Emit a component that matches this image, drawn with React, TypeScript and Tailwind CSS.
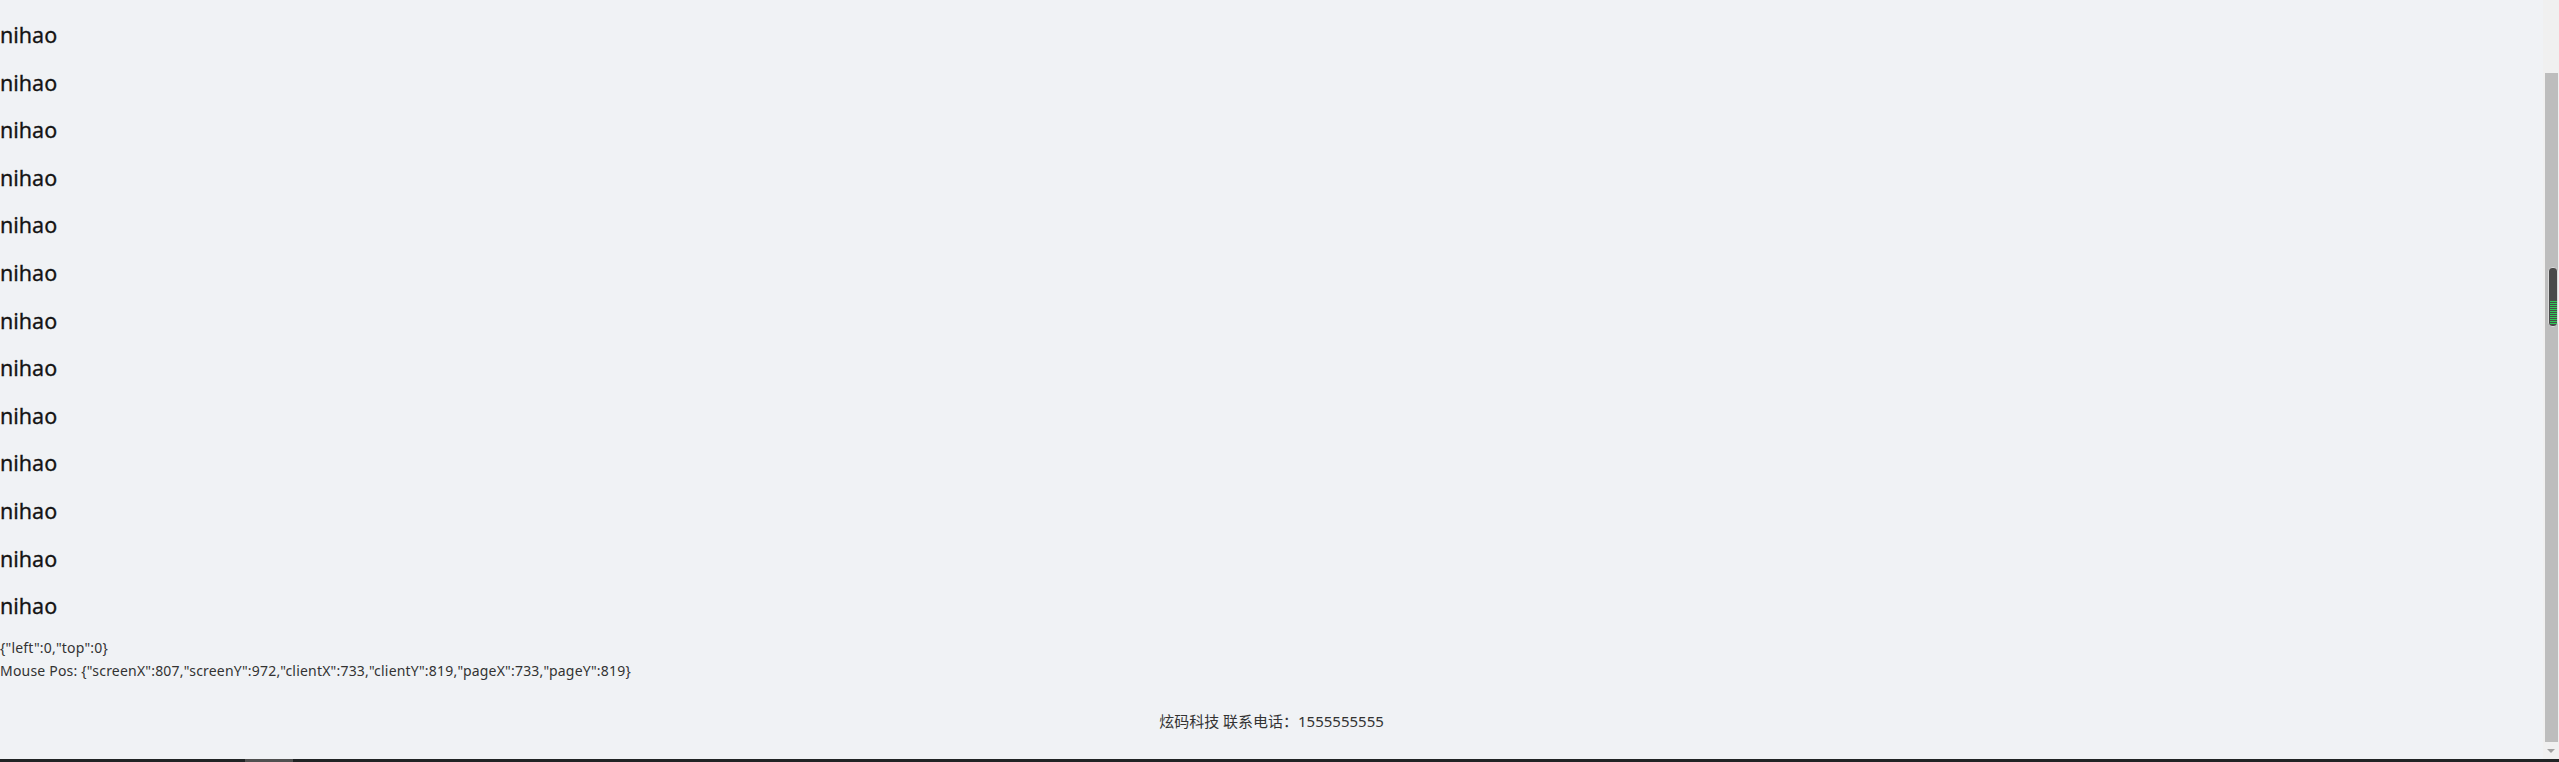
import React from "react";

const rows = Array.from({ length: 13 }, (_, i) => i);
const stripes = Array.from({ length: 12 }, (_, i) => i);

export default function App() {
  return (
    <div
      className="w-[2559px] h-[762px] overflow-hidden flex flex-col bg-[#f0f2f5]"
      style={{ fontFamily: '"Noto Sans", "Noto Sans CJK SC", sans-serif' }}
    >
      <div className="flex flex-1 min-h-0">
        <div className="flex-1 flex flex-col">
          <div className="pt-[11px] flex flex-col">
            {rows.map((i) => (
              <div key={i} className="h-[47.6px] text-[21.5px] leading-[47.6px] text-[#141414] font-normal [-webkit-text-stroke:0.3px_#141414]">
                nihao
              </div>
            ))}
          </div>
          <div className="mt-[6.3px] text-[14px] leading-[23px] text-[#333333] tracking-[0.2px]">
            <div>{'{"left":0,"top":0}'}</div>
            <div>
              {'Mouse Pos: {"screenX":807,"screenY":972,"clientX":733,"clientY":819,"pageX":733,"pageY":819}'}
            </div>
          </div>
          <div className="mt-[28px] text-center text-[15px] leading-[22px] text-[#333333]">
            炫码科技 联系电话：1555555555
          </div>
        </div>
        <div className="w-[16px] bg-[#f0f0f0] flex flex-col">
          <div className="h-[73px]" />
          <div className="relative ml-[2px] mr-[1px] h-[669px] bg-[#bdbdbd]">
            <div className="absolute left-[3px] right-0 top-[194px] h-[60px] rounded-[4px] bg-[#4a4a4a] border border-[#d8d8d8] flex flex-col justify-end items-center pb-[2px]">
              <div className="flex flex-col gap-[1px] w-[7px]">
                {stripes.map((s) => (
                  <div key={s} className="h-[1px] bg-[#2ecc55]" />
                ))}
              </div>
            </div>
          </div>
          <div className="flex-1 flex items-center justify-center">
            <div className="w-0 h-0 border-l-[4px] border-r-[4px] border-t-[4px] border-l-transparent border-r-transparent border-t-[#a0a0a0]" />
          </div>
        </div>
      </div>
      <div className="h-[3px] bg-[#202324] flex">
        <div className="w-[245px]" />
        <div className="w-[48px] bg-[#505050]" />
      </div>
    </div>
  );
}
